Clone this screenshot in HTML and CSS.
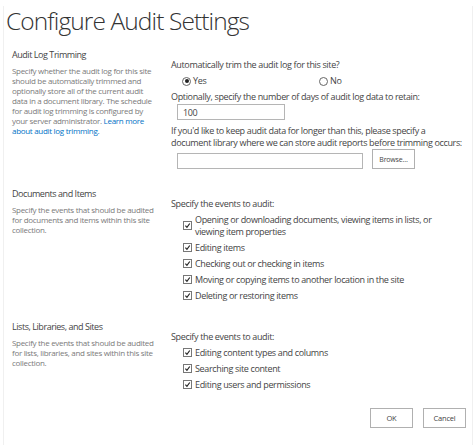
FILE: index.html
```html
<!DOCTYPE html>
<html lang="en">
<head>
<meta charset="utf-8">
<title>Configure Audit Settings</title>
<link rel="stylesheet" href="styles.css">
</head>
<body>
<div class="page">
  <h1 class="title">Configure Audit Settings</h1>

  <section class="section s1">
    <div class="info">
      <h2>Audit Log Trimming</h2>
      <p>Specify whether the audit log for this site<br>should be automatically trimmed and<br>optionally store all of the current audit<br>data in a document library. The schedule<br>for audit log trimming is configured by<br>your server administrator. <a href="#">Learn more<br>about audit log trimming.</a></p>
    </div>
    <div class="fields">
      <p class="label">Automatically trim the audit log for this site?</p>
      <div class="radios">
        <label class="radio-opt yes"><span class="radio on"></span>Yes</label>
        <label class="radio-opt"><span class="radio"></span>No</label>
      </div>
      <p class="label">Optionally, specify the number of days of audit log data to retain:</p>
      <input class="textbox days" type="text" value="100">
      <p class="label two">If you'd like to keep audit data for longer than this, please specify a<br>document library where we can store audit reports before trimming occurs:</p>
      <div class="browse-row">
        <input class="textbox lib" type="text" value="">
        <button class="btn browse" type="button">Browse…</button>
      </div>
    </div>
  </section>

  <section class="section s2">
    <div class="info">
      <h2>Documents and Items</h2>
      <p>Specify the events that should be audited<br>for documents and items within this site<br>collection.</p>
    </div>
    <div class="fields">
      <p class="label">Specify the events to audit:</p>
      <ul class="checks">
        <li><span class="check"><svg viewBox="0 0 9 9"><polyline points="1.8,4.6 3.8,6.8 7.4,1.9"/></svg></span><span>Opening or downloading documents, viewing items in lists, or<br>viewing item properties</span></li>
        <li><span class="check"><svg viewBox="0 0 9 9"><polyline points="1.8,4.6 3.8,6.8 7.4,1.9"/></svg></span><span>Editing items</span></li>
        <li><span class="check"><svg viewBox="0 0 9 9"><polyline points="1.8,4.6 3.8,6.8 7.4,1.9"/></svg></span><span>Checking out or checking in items</span></li>
        <li><span class="check"><svg viewBox="0 0 9 9"><polyline points="1.8,4.6 3.8,6.8 7.4,1.9"/></svg></span><span>Moving or copying items to another location in the site</span></li>
        <li><span class="check"><svg viewBox="0 0 9 9"><polyline points="1.8,4.6 3.8,6.8 7.4,1.9"/></svg></span><span>Deleting or restoring items</span></li>
      </ul>
    </div>
  </section>

  <section class="section s3">
    <div class="info">
      <h2>Lists, Libraries, and Sites</h2>
      <p>Specify the events that should be audited<br>for lists, libraries, and sites within this site<br>collection.</p>
    </div>
    <div class="fields">
      <p class="label">Specify the events to audit:</p>
      <ul class="checks">
        <li><span class="check"><svg viewBox="0 0 9 9"><polyline points="1.8,4.6 3.8,6.8 7.4,1.9"/></svg></span><span>Editing content types and columns</span></li>
        <li><span class="check"><svg viewBox="0 0 9 9"><polyline points="1.8,4.6 3.8,6.8 7.4,1.9"/></svg></span><span>Searching site content</span></li>
        <li><span class="check"><svg viewBox="0 0 9 9"><polyline points="1.8,4.6 3.8,6.8 7.4,1.9"/></svg></span><span>Editing users and permissions</span></li>
      </ul>
    </div>
  </section>

  <div class="actions">
    <button class="btn action" type="button">OK</button>
    <button class="btn action" type="button">Cancel</button>
  </div>
</div>
</body>
</html>
```

FILE: styles.css
```css
html, body {
  margin: 0;
  padding: 0;
  background: #ffffff;
}

body {
  font-family: "Open Sans", "Noto Sans", sans-serif;
  color: #444444;
}

.page {
  margin-left: 3px;
  margin-right: 1px;
  height: 443px;
  box-sizing: border-box;
  border-left: 1px solid #f0f0f0;
  border-right: 1px solid #f0f0f0;
  border-bottom: 1px solid #ececec;
}

.title {
  margin: 6px 0 0 2px;
  font-weight: 300;
  font-size: 24.5px;
  line-height: 30px;
  letter-spacing: -0.9px;
  color: #333333;
}

.section {
  display: grid;
  grid-template-columns: 167px 1fr;
}

.s1 { margin-top: 13px; }
.s2 { margin-top: 18.5px; }
.s3 { margin-top: 19px; }

.info {
  padding-left: 8px;
}

.info h2 {
  margin: 0;
  font-size: 9px;
  font-weight: 400;
  line-height: 12px;
  letter-spacing: -0.45px;
  color: #444444;
}

.info p {
  margin: 5px 0 0;
  font-size: 8px;
  line-height: 10px;
  letter-spacing: -0.3px;
  color: #7a7a7a;
}

.info a {
  color: #0072c6;
  text-decoration: none;
}

.fields {
  padding-top: 10px;
  font-size: 9px;
  letter-spacing: -0.35px;
  color: #444444;
}

.label {
  margin: 0;
  line-height: 12px;
}

.label.two {
  margin-top: 5px;
  line-height: 12px;
}

.radios {
  display: flex;
  margin-top: 4px;
  padding-left: 11px;
  line-height: 12px;
}

.radios + .label {
  margin-top: 4px;
}

.radio-opt {
  display: flex;
  align-items: center;
  gap: 2px;
}

.radio-opt.yes {
  width: 137px;
}

.radio {
  width: 7px;
  height: 7px;
  border: 1px solid #666666;
  border-radius: 50%;
  display: flex;
  align-items: center;
  justify-content: center;
}

.radio.on::after {
  content: "";
  width: 4px;
  height: 4px;
  border-radius: 50%;
  background: #222222;
}

.textbox {
  display: block;
  box-sizing: border-box;
  height: 16px;
  margin: 0;
  padding: 0 5px;
  border: 1px solid #b5b5b5;
  background: #ffffff;
  font-family: inherit;
  font-size: 9px;
  letter-spacing: -0.35px;
  color: #444444;
  outline: none;
}

.days {
  margin-top: 1px;
  margin-left: 6px;
  width: 108px;
}

.browse-row {
  display: flex;
  align-items: flex-end;
  gap: 9px;
  padding-left: 6px;
}

.lib {
  width: 186px;
}

.btn {
  box-sizing: border-box;
  margin: 0;
  padding: 0;
  border: 1px solid #b0b0b0;
  background: #ffffff;
  font-family: inherit;
  color: #444444;
}

.browse {
  width: 43px;
  height: 20px;
  font-size: 7px;
  letter-spacing: -0.2px;
}

.checks {
  list-style: none;
  margin: 0;
  padding: 0 0 0 12px;
}

.checks li {
  display: flex;
  align-items: center;
  gap: 3px;
  margin-top: 4px;
  line-height: 12px;
}

.check {
  flex: none;
  width: 9px;
  height: 9px;
  box-sizing: border-box;
  border: 1px solid #777777;
  background: #ffffff;
  display: flex;
}

.check svg {
  width: 7px;
  height: 7px;
}

.check polyline {
  fill: none;
  stroke: #222222;
  stroke-width: 1.5;
}

.actions {
  display: flex;
  justify-content: flex-end;
  gap: 10px;
  margin-top: 17px;
  padding-right: 6px;
}

.action {
  width: 43px;
  height: 20px;
  font-size: 7.5px;
  letter-spacing: -0.2px;
}
```
